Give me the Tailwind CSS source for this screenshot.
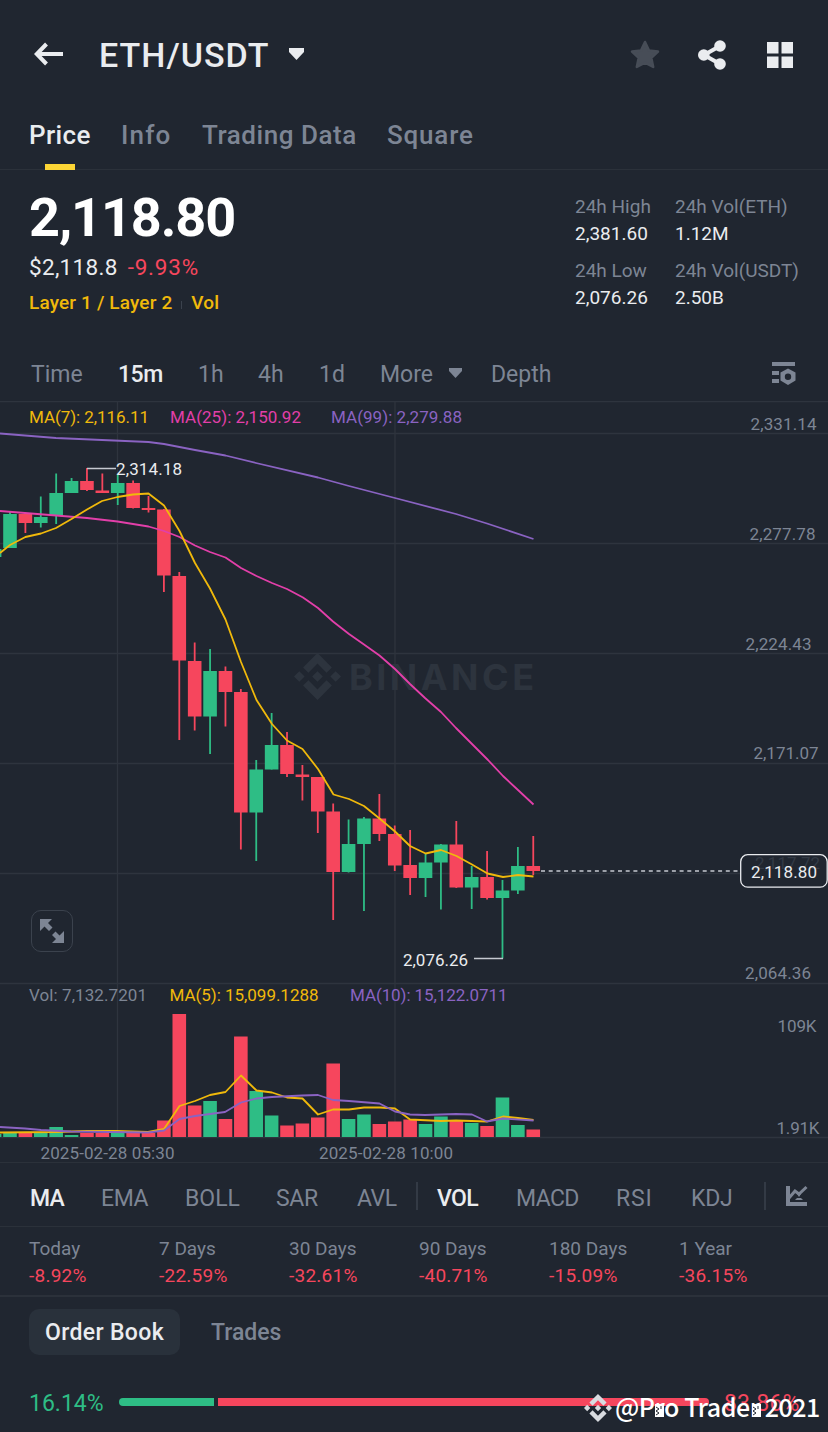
<!DOCTYPE html>
<html lang="en">
    <head>
        <meta charset="UTF-8">
        <meta name="viewport" content="width=device-width, initial-scale=1.0">
        <script src="https://cdn.jsdelivr.net/npm/@tailwindcss/browser@4"></script>
        <title>ETH/USDT</title>
    </head>
    <body class="relative w-[828px] h-[1432px] overflow-hidden bg-[#202630] font-['Roboto',sans-serif] text-[#7d8594] whitespace-nowrap">
        <svg class="hidden">
            <symbol id="logo" viewBox="0 0 24 24">
                <path d="M16.624 13.9202l2.7175 2.7154-7.353 7.353-7.353-7.352 2.7175-2.7164 4.6355 4.6595 4.6356-4.6595zm4.6366-4.6366L24 12l-2.7154 2.7164L18.5682 12l2.6924-2.7164zm-9.272.001l2.7163 2.6914-2.7164 2.7174v-.001L9.2721 12l2.7164-2.7154zm-9.2722-.001L5.4088 12l-2.6914 2.6924L0 12l2.7164-2.7164zM11.9885.0115l7.353 7.329-2.7174 2.7154-4.6356-4.6356-4.6355 4.6595-2.7174-2.7154 7.353-7.353z" fill="currentColor" />
            </symbol>
        </svg>

        <header class="flex items-center h-[110px] pl-[34px] pr-[35px] text-[#eaecef]">
            <svg class="w-[29px] h-6 -mt-0.5" viewBox="0 0 29 24" fill="none" stroke="currentColor" stroke-width="4">
                <path d="M29 12H3M12.500 2L2.800 12l9.700 10" />
            </svg>
            <h1 class="ml-[36px] w-[190px] text-[34px] leading-none font-medium tracking-[1px]">ETH/USDT</h1>
            <svg class="w-[15px] h-3 -mt-0.5" viewBox="0 0 15 12"><path d="M0 0h15v4L7.500 12 0 4z" fill="currentColor" /></svg>
            <div class="flex items-center ml-auto">
                <svg class="w-[30px] h-[30px] mr-[38px] text-[#474d57]" viewBox="0 0 30 30">
                    <path d="M15 2l3.900 8.400 9.100 1.100-6.700 6.300 1.900 9.200L15 22.700 6.800 27l1.900-9.200L2 11.500l9.100-1.100z" fill="currentColor" stroke="currentColor" stroke-width="2.500" stroke-linejoin="round" />
                </svg>
                <svg class="w-[28px] h-[30px] mr-[41px]" viewBox="0 0 28 30" fill="currentColor">
                    <path d="M22 6L6 15l16 9" fill="none" stroke="currentColor" stroke-width="4" />
                    <circle cx="5.800" cy="15" r="5.800" /><circle cx="22" cy="6" r="5.800" /><circle cx="22" cy="24" r="5.800" />
                </svg>
                <svg class="w-[26px] h-[26px]" viewBox="0 0 26 26" fill="currentColor">
                    <path d="M0 0h11.500v11.500H0zM14.500 0H26v11.500H14.500zM0 14.500h11.500V26H0zM14.500 14.500H26V26H14.500z" />
                </svg>
            </div>
        </header>

        <nav class="grid grid-cols-[92px_81px_185px_1fr] h-[60px] pl-[29px] border-b border-[#2b313a] text-[26px] leading-[50px] font-medium">
            <a class="relative h-[60px] text-[#eaecef] tracking-[0.4px]">Price<i class="absolute left-4 bottom-0 w-[30px] h-[6px] bg-[#fcd535]"></i></a>
            <a class="tracking-[1.200px]">Info</a>
            <a class="tracking-[0.550px]">Trading Data</a>
            <a class="tracking-[0.8px]">Square</a>
        </nav>

        <section class="flex justify-between h-[175px] pl-[29px]">
            <div class="pt-[20px]">
                <div class="text-[54px] leading-[56px] font-bold text-white tracking-[-1.100px]">2,118.80</div>
                <div class="flex gap-2.5 mt-1.5 text-[22.500px] leading-[30px]">
                    <span class="text-[#eaecef] tracking-[0.3px]">$2,118.8</span>
                    <span class="text-[#f6465d] tracking-[0.8px]">-9.93%</span>
                </div>
                <div class="flex items-center mt-[9px] text-[19px] leading-6 font-medium text-[#f0b90b] tracking-[0.150px]">
                    <span>Layer 1 / Layer 2</span>
                    <i class="w-px h-2 mx-[9px] mt-1 bg-[#3b424d]"></i>
                    <span>Vol</span>
                </div>
            </div>
            <dl class="grid grid-cols-[100px_153px] grid-rows-[27px_37px_27px_27px] pt-[23px] text-[19px] leading-[27px]">
                <dt>24h High</dt><dt>24h Vol(ETH)</dt>
                <dd class="text-[#eaecef]">2,381.60</dd><dd class="text-[#eaecef]">1.12M</dd>
                <dt>24h Low</dt><dt>24h Vol(USDT)</dt>
                <dd class="text-[#eaecef]">2,076.26</dd><dd class="text-[#eaecef]">2.50B</dd>
            </dl>
        </section>

        <div class="grid grid-cols-[87px_80px_60px_61px_61px_69px_42px_1fr_26px] items-center h-[56px] pl-[31px] pr-[31px] text-[23px] leading-[52px]">
            <span class="pt-1">Time</span>
            <span class="pt-1 font-medium text-[#eaecef] tracking-[-0.5px]">15m</span>
            <span class="pt-1">1h</span>
            <span class="pt-1">4h</span>
            <span class="pt-1">1d</span>
            <span class="pt-1">More</span>
            <svg class="w-[13px] h-[10px]" viewBox="0 0 13 10"><path d="M0 0h13v3L6.500 10 0 3z" fill="currentColor" /></svg>
            <span class="pt-1">Depth</span>
            <svg class="w-[26px] h-6" viewBox="0 0 26 24" fill="currentColor">
                <path d="M1 1h23v4H1zM1 10h7v4H1zM1 18h7v4H1z" />
                <path fill-rule="evenodd" d="M17 7.500l7.500 4v8L17 24l-7.500-4.500v-8zm0 5a3.200 3.200 0 100 6.400 3.200 3.200 0 000-6.400z" />
            </svg>
        </div>

        <div class="relative h-[761px]">
            <svg id="chart" class="block w-[828px] h-[761px]" viewBox="0 401 828 761" font-size="17"></svg>
            <button class="absolute left-[31px] top-[509px] w-[42px] h-[42px] rounded-[10px] border-[1.500px] border-[#3b424d]">
                <svg class="absolute left-2 top-2 w-6 h-6" viewBox="0 0 24 24" fill="currentColor">
                    <path d="M0 0h12L8 4l4.500 4.500-3.500 3.500L4.500 7.500 0 12zM24 24H12l4-4-4-4 3.500-3.500 4 4L24 12z" />
                </svg>
            </button>
        </div>

        <div class="grid grid-cols-[71px_84px_91px_81px_59px_21px_79px_100px_75px_74px_22px_1fr] items-center h-[65px] pl-[30px] border-t border-b border-[#2b313a] text-[23px] leading-none pt-1.5">
            <span class="pt-0.5 font-medium text-[#eaecef] tracking-[-0.8px]">MA</span>
            <span class="pt-0.5 tracking-[-0.4px]">EMA</span>
            <span class="pt-0.5">BOLL</span>
            <span class="pt-0.5 tracking-[-0.3px]">SAR</span>
            <span class="pt-0.5 tracking-[-0.5px]">AVL</span>
            <i class="w-0.5 h-7 -mt-1 bg-[#333a45]"></i>
            <span class="pt-0.5 font-medium text-[#eaecef] tracking-[-0.6px]">VOL</span>
            <span class="pt-0.5 tracking-[-0.6px]">MACD</span>
            <span class="pt-0.5 tracking-[0.8px]">RSI</span>
            <span class="pt-0.5 tracking-[-0.3px]">KDJ</span>
            <i class="w-0.5 h-7 -mt-1 -ml-px bg-[#333a45]"></i>
            <svg class="w-[22px] h-[22px] -mt-1 -ml-px" viewBox="0 0 22 22" fill="none" stroke="currentColor">
                <path d="M2 1v18h19" stroke-width="4" />
                <path d="M3 13l6-7 4 3 7.500-7" stroke-width="3" />
                <path d="M9 15h8l-2-2h-4zM11 9h4l-2 3z" fill="currentColor" stroke="none" />
            </svg>
        </div>

        <div class="grid grid-cols-[130px_130px_130px_130px_130px_1fr] h-[70px] pl-[29px] pt-[8px] border-b-2 border-[#2b313a] text-[19px] leading-[27px]">
            <div>Today<p class="text-[#f6465d] tracking-[0.250px]">-8.92%</p></div>
            <div>7 Days<p class="text-[#f6465d] tracking-[0.250px]">-22.59%</p></div>
            <div>30 Days<p class="text-[#f6465d] tracking-[0.250px]">-32.61%</p></div>
            <div>90 Days<p class="text-[#f6465d] tracking-[0.250px]">-40.71%</p></div>
            <div>180 Days<p class="text-[#f6465d] tracking-[0.250px]">-15.09%</p></div>
            <div>1 Year<p class="text-[#f6465d] tracking-[0.250px]">-36.15%</p></div>
        </div>

        <div class="flex items-center pl-[29px] mt-3 text-[23px] font-medium">
            <button class="w-[151px] h-[46px] pt-[3px] rounded-[10px] bg-[#29313b] text-[#eaecef] tracking-[0.350px]">Order Book</button>
            <button class="ml-[31px] pt-[3px]">Trades</button>
        </div>

        <div class="flex items-center mt-[30px] pl-[29px] text-[23px] leading-8">
            <span class="w-[90px] pt-[3px] -mb-px text-[#2ebd85]">16.14%</span>
            <i class="w-[95px] h-2 rounded-l-full bg-[#2ebd85]"></i>
            <i class="w-[491px] h-2 ml-1 rounded-r-full bg-[#f6465d]"></i>
            <span class="ml-[15px] pt-[3px] -mb-px text-[#f6465d] tracking-[0.150px]">83.86%</span>
        </div>

        <!-- author stamp -->
        <div class="absolute left-[584px] top-[1390px] flex items-center h-9 text-white">
            <svg class="w-[28px] h-[28px] text-[#d8dbe0]"><use href="#logo" /></svg>
            <span class="ml-[3px] -mt-1 font-['Noto_Sans_CJK_SC',sans-serif] font-medium text-[25px] leading-9 tracking-[-0.450px]">@Pro Trader 2021</span>
            <svg class="absolute left-[71px] top-[14px] w-[9px] h-[13px]" viewBox="0 0 9 13"><path d="M0 0h9v13H0z" fill="#fff" /><path d="M1 3l3 2-3 2 3 2-3 2M6 2v3" stroke="#202630" fill="none" /></svg>
            <svg class="absolute left-[168px] top-[14px] w-[9px] h-[13px]" viewBox="0 0 9 13"><path d="M0 0h9v13H0z" fill="#fff" /><path d="M1 3l3 2-3 2 3 2-3 2M6 2v3" stroke="#202630" fill="none" /></svg>
        </div>

        <script>
            const GREEN = "#2ebd85", RED = "#f6465d", YELLOW = "#f0b90b", PINK = "#e23fa9", PURPLE = "#8a63c2"
            const GRID = "#2e343e", GREY = "#7d8594", WHITE = "#eaecef"
            // up?, high, body top, body bottom, low, volume top
            const candles = [
                [1, 548, 549, 557, 557, 1134], [1, 512, 514, 548, 548, 1132.5], [0, 513, 514, 523, 533, 1132.5],
                [1, 496.5, 517, 523, 527.5, 1132], [1, 473.5, 493, 516, 524, 1127], [1, 478, 481, 493, 493, 1135],
                [0, 468, 481, 490, 491, 1133], [0, 473.5, 490.5, 493, 493, 1133], [1, 474, 483, 493, 505, 1133],
                [0, 480.5, 483, 508, 508.5, 1133], [0, 496, 508, 510, 512.5, 1133], [0, 509, 509.5, 575.5, 592, 1120.5],
                [0, 572, 576, 660.5, 740, 1014], [0, 642.5, 661, 716.5, 730.5, 1105.5], [1, 649, 671, 716.5, 754, 1101],
                [0, 666.5, 671, 692, 726.5, 1119], [0, 689, 692, 812.5, 849.5, 1036.5], [1, 760, 769.5, 812.5, 861, 1091],
                [1, 713, 745, 769.5, 769.5, 1115.5], [0, 732, 745, 774, 777, 1125.5], [0, 765, 774.5, 777, 800.5, 1123.5],
                [0, 777, 777, 811.5, 833, 1117.5], [0, 803.5, 811.5, 872, 920, 1063.5], [1, 819.5, 844, 872, 872.5, 1119],
                [1, 817, 818.5, 844, 911, 1114.5], [0, 794, 818.5, 834, 841, 1124], [0, 825.5, 834, 865.5, 871, 1121.5],
                [0, 830, 865, 878, 895, 1119.5], [1, 854, 862.5, 878, 897, 1124], [1, 844, 844.5, 862.5, 909.5, 1116.5],
                [0, 821, 844.5, 887.5, 888, 1121], [1, 866, 877, 887.5, 909, 1123], [0, 851, 877, 898, 899.5, 1126],
                [1, 880, 890.5, 898, 958.5, 1097.5], [1, 847, 866, 890.5, 894, 1125], [0, 836, 866, 871, 875, 1129.5]
            ]
            const averages = [
                [PURPLE, "0,433.5 56,438 102,440 148.500,442 164,444 195,450 225.500,455.5 256,463 318,477.5 349,486 395,498 456,514 487,523.5 533.500,539"],
                [PINK, "0,511 25,513 56,515.5 87,518 117.500,521.5 148.500,526.5 164,531 179.500,537 195,545.5 210,552 225.500,557.5 241,568 256.500,576 272,583 287,589 303,597.5 318,608 333,621.5 349,634 364,644.5 379.500,655.5 395,669 410,684 425,698 441,712 456,728 472,744 488,760 503,776 518,790 533.500,804.5"],
                [YELLOW, "0,553 10,545 25.400,537 41,533.5 56,528 71.500,519 87,509.5 102,501 117.500,497 133,494.5 148.500,493.5 164,505.5 179.500,531 195,563 210,588.5 225.500,619.5 241,662 256.500,700 272,724 287,740.5 302.500,749 318,769 333.500,794.5 349,799 364,806 379.500,818.5 395,831.5 410,846 425.700,853.5 441,850 456.500,856 472,864.5 487.500,873.5 503,877 518,875 533.500,876.5"],
                [YELLOW, "0,1132.5 56,1132 87,1131 117,1131 148,1132 164,1129 179.500,1106 195,1101 210,1095 225.500,1092 241,1075.5 256.500,1090.5 272,1092.5 287,1097.5 302.500,1098.5 318,1114.5 333,1109.5 349,1109.5 364,1107.5 380,1107.5 395,1108.5 410,1119.5 441,1121 456,1120.5 487,1121.5 503,1116.5 518,1118 533.500,1120"],
                [PURPLE, "0,1127 25,1128.5 41,1130 71,1131.5 148,1132.5 164,1130.5 179.500,1119 195,1116 225,1112 241,1102.5 256.500,1098.5 272,1097 302,1095.5 318,1095 333,1100 349,1101 379.500,1103.5 395,1111.5 410,1114.5 425,1115 456,1114 472,1114.5 487,1121.5 503,1118.5 533.500,1120.5"]
            ]
            // text, x, baseline, width, colour
            const labels = [
                ["MA(7): 2,116.11", 29, 422.5, 120, YELLOW], ["MA(25): 2,150.92", 170, 422.5, 131, PINK], ["MA(99): 2,279.88", 331, 422.5, 131, PURPLE],
                ["2,331.14", 750.5, 429.5, 66, GREY], ["2,277.78", 749.5, 539.5, 66, GREY], ["2,224.43", 745.5, 649.5, 66, GREY],
                ["2,171.07", 753.5, 759, 65, GREY], ["2,064.36", 745, 979, 66, GREY],
                ["2,314.18", 116, 474.5, 66, WHITE], ["2,076.26", 403, 965.5, 65, WHITE],
                ["Vol: 7,132.7201", 29, 1000.5, 118, GREY], ["MA(5): 15,099.1288", 169.5, 1000.5, 149, YELLOW], ["MA(10): 15,122.0711", 350, 1000.5, 157.5, PURPLE],
                ["109K", 777.5, 1031.5, 39, GREY], ["1.91K", 776.5, 1133.5, 43, GREY],
                ["2025-02-28 05:30", 40.5, 1158.5, 134, GREY], ["2025-02-28 10:00", 319, 1158.5, 134, GREY]
            ]
            const text = ([t, x, y, w, c]) => `<text x="${x}" y="${y}" textLength="${w}" fill="${c}">${t}</text>`

            let out = ""
            for (const y of [401.5, 433.5, 543.5, 653.5, 763.5, 873.5, 983.5, 1137.5]) {
                out += `<path d="M0 ${y}H828" stroke="${GRID}" stroke-width="1.300"/>`
            }
            out += `<path d="M117.500 402V1137M395 402V1137" stroke="${GRID}" stroke-width="1.300"/>`
            out += `<use href="#logo" x="294" y="653" width="47" height="47" color="#2d343e"/>`
            out += `<text x="349" y="689.500" textLength="185" font-family="Inter" font-size="36" font-weight="700" fill="#2d343e">BINANCE</text>`
            candles.forEach(([up, high, top, bottom, low, vol], i) => {
                const x = 10 + (i - 1) * 15.39
                const c = up ? GREEN : RED
                out += `<path d="M${x} ${high}V${low}" stroke="${c}" stroke-width="1.800"/>`
                out += `<path d="M${x - 6.8} ${top}h13.600V${bottom}h-13.600z M${x - 6.8} ${vol}h13.600V1137h-13.600z" fill="${c}"/>`
            })
            for (const [c, points] of averages) {
                out += `<polyline points="${points}" fill="none" stroke="${c}" stroke-width="1.800" stroke-linejoin="round"/>`
            }
            out += `<path d="M87 468.500H116M474 958.500H503" stroke="#c5c9d0" stroke-width="1.300"/>`
            out += `<path d="M541 871H740" stroke="#c5c9d0" stroke-width="1.300" stroke-dasharray="4 3.700"/>`
            out += labels.map(text).join("")
            // last price tag
            out += `<rect x="740.700" y="854.700" width="86.500" height="32.500" rx="7" fill="#202630" stroke="${WHITE}" stroke-width="1.300"/>`
            out += text(["2,117.72", 755, 869, 65, "#333a45"]) + text(["2,118.80", 751, 878, 66, WHITE])
            document.querySelector("#chart").innerHTML = out
        </script>
    </body>
</html>
